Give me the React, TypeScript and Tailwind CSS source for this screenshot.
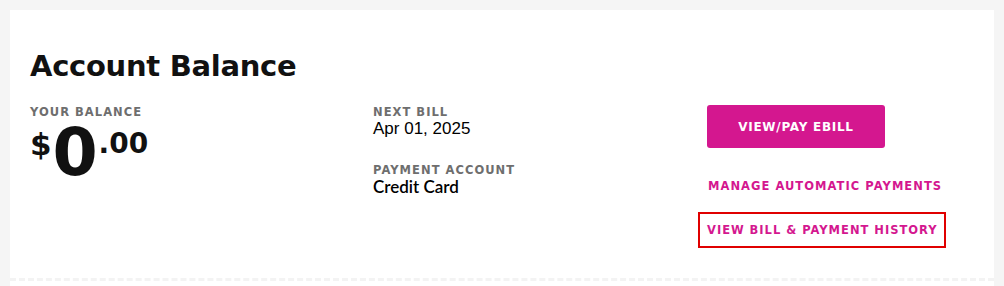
import React from 'react';

const geo = { fontFamily: '"DejaVu Sans", "Open Sans", sans-serif' };

const Label: React.FC<{ children: React.ReactNode }> = ({ children }) => (
  <div className="text-[11.5px] font-bold tracking-[0.09em] text-[#6e6e6e] leading-[14px]" style={geo}>
    {children}
  </div>
);

export default function App() {
  return (
    <div className="w-[1004px] h-[286px] bg-[#f5f5f5] pt-[10px] px-[10px] overflow-hidden">
      <div className="bg-white h-[271px] border-b-[3px] border-dashed border-[#f3f3f3] pl-[20px] pt-[36px]">
        <h1 className="text-[29px] font-bold leading-[40px] text-[#111] tracking-[-0.01em]" style={geo}>
          Account Balance
        </h1>
        <div className="grid grid-cols-[343px_334px_1fr] mt-[19px]">
          <div>
            <Label>YOUR BALANCE</Label>
            <div className="flex items-start text-[#111] font-bold mt-[1px]" style={geo}>
              <span className="text-[31px] leading-none mt-[9px]">$</span>
              <span className="text-[65px] leading-none tracking-[-0.02em] ml-[1px] mr-[2px]">0</span>
              <span className="text-[28px] leading-none mt-[10px]">.00</span>
            </div>
          </div>
          <div>
            <Label>NEXT BILL</Label>
            <div className="text-[17px] leading-[20px] text-black" style={{ fontFamily: '"Liberation Sans", Arial, sans-serif' }}>
              Apr 01, 2025
            </div>
            <div className="mt-[24px]">
              <Label>PAYMENT ACCOUNT</Label>
              <div className="text-[17px] leading-[20px] font-semibold text-black" style={{ fontFamily: 'Lato, "Open Sans", sans-serif' }}>
                Credit Card
              </div>
            </div>
          </div>
          <div className="flex flex-col items-start">
            <button
              className="w-[178px] h-[43px] bg-[#d4178f] text-white rounded-[3px] text-[12px] font-bold tracking-[0.06em]"
              style={geo}
            >
              VIEW/PAY EBILL
            </button>
            <a className="mt-[31px] ml-[1px] text-[11.5px] font-bold tracking-[0.09em] text-[#d4178f] leading-[14px]" style={geo}>
              MANAGE AUTOMATIC PAYMENTS
            </a>
            <a
              className="mt-[19px] -ml-[9px] border-2 border-[#e00000] px-[7px] py-[9px] text-[11.5px] font-bold tracking-[0.085em] text-[#d4178f] leading-[14px]"
              style={geo}
            >
              VIEW BILL &amp; PAYMENT HISTORY
            </a>
          </div>
        </div>
      </div>
      <div className="bg-white h-[10px]" />
    </div>
  );
}
